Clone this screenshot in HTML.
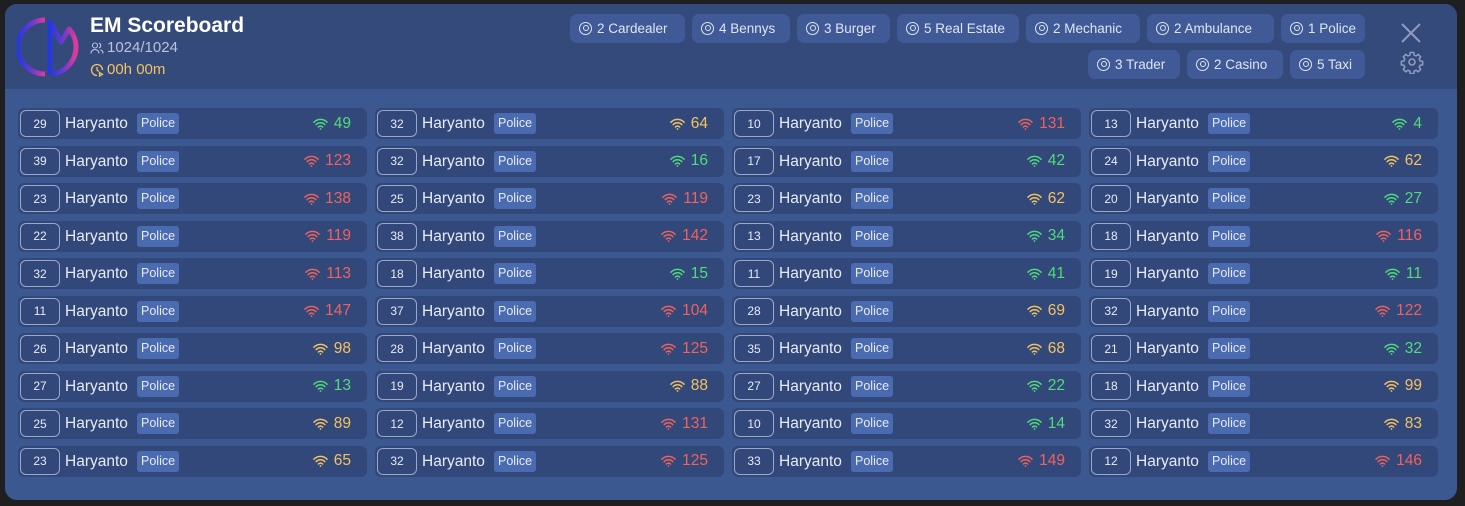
<!DOCTYPE html>
<html><head><meta charset="utf-8"><style>
*{box-sizing:border-box;margin:0;padding:0}
body{width:1465px;height:506px;background:#1f1f22;font-family:"Liberation Sans",sans-serif;position:relative;overflow:hidden}
.panel{position:absolute;left:5px;top:4px;width:1452px;height:496px;border-radius:12px;background:#3c5890;overflow:hidden}
.head{position:absolute;left:0;top:0;width:100%;height:85px;background:#344a7b}
.title{position:absolute;left:85px;top:10px;color:#fff;font-size:21px;font-weight:bold}
.sub{position:absolute;left:85px;color:#b9c3dc;font-size:15px;display:flex;align-items:center;gap:3px}
.chip{position:absolute;height:29px;background:#3f5a96;border-radius:7px;color:#dfe5f3;font-size:13.5px;display:flex;align-items:center;padding-left:9px;gap:5px}
.ci{width:13px;height:13px;border:1.5px solid #dfe5f3;border-radius:50%;position:relative}
.ci:after{content:"";position:absolute;left:3px;top:1.5px;width:4px;height:4px;border:1.3px solid #dfe5f3;border-radius:50%}
.grid{position:absolute;left:13px;top:104px;display:grid;grid-template-columns:repeat(4,349px);column-gap:8px;row-gap:6.5px;grid-auto-flow:column;grid-template-rows:repeat(10,31px)}
.r{background:#33487a;border-radius:6px;position:relative;color:#e6ebf6;font-size:15.5px}
.id{position:absolute;left:2px;top:2px;width:40px;height:27px;border:1px solid #9aa7c6;border-radius:6px;font-size:12px;display:flex;align-items:center;justify-content:center}
.n{position:absolute;left:47px;top:0;line-height:31px}
.p{position:absolute;left:119px;top:5px;background:#4b6bb0;border-radius:3px;font-size:12.5px;padding:0 4px;height:21px;line-height:21px}
.v{position:absolute;right:16px;top:0;height:31px;display:flex;align-items:center;gap:6px;font-size:15.5px}
.v svg{width:15px;height:12px}
.g{color:#4fdc7a}.y{color:#f3c360}.rd{color:#f0625c}
</style></head><body>
<svg width="0" height="0" style="position:absolute"><defs><symbol id="wf" viewBox="0 0 15 12"><path d="M1 4.2 A9 9 0 0 1 14 4.2 M3.2 6.6 A6 6 0 0 1 11.8 6.6 M5.4 9 A3 3 0 0 1 9.6 9" fill="none" stroke="currentColor" stroke-width="1.5" stroke-linecap="round"/><circle cx="7.5" cy="11" r="0.9" fill="currentColor"/></symbol></defs></svg>
<div class="panel">
<div class="head">
<svg style="position:absolute;left:12px;top:12px" width="62" height="62" viewBox="0 0 62 62"><defs><linearGradient id="lg" x1="0" x2="1"><stop offset="0" stop-color="#2438e0"/><stop offset="0.5" stop-color="#6a3ad0"/><stop offset="1" stop-color="#e23a9c"/></linearGradient></defs><path d="M28 4 A27 27 0 0 0 28 58" fill="none" stroke="url(#lg)" stroke-width="5"/><path d="M4 31 H26" stroke="url(#lg)" stroke-width="5"/><path d="M33 58 V6 L44 26 L52 13 A27 27 0 0 1 34 58" fill="none" stroke="url(#lg)" stroke-width="5" stroke-linejoin="round"/></svg>
<div class="title">EM Scoreboard</div>
<div class="sub" style="top:35px"><svg width="14" height="14" viewBox="0 0 14 14" fill="none" stroke="#b9c3dc" stroke-width="1.1"><circle cx="5" cy="4.5" r="2.5"/><path d="M1 12.5c0-2.5 1.8-4 4-4s4 1.5 4 4M9 2.2a2.4 2.4 0 0 1 0 4.6M10.5 8.8c1.5.5 2.5 1.8 2.5 3.7"/></svg>1024/1024</div>
<div class="sub" style="top:57px;color:#f3c360"><svg width="14" height="14" viewBox="0 0 14 14" fill="none" stroke="#f3c360" stroke-width="1.3"><path d="M12.5 7A5.5 5.5 0 1 0 7 12.5M7 4v3.2l2 1.3"/><path d="M9.5 9.5l3 1.8-3 1.8z"/></svg>00h 00m</div>
<div class="chip" style="left:565px;top:10px;width:115px"><span class="ci"></span>2 Cardealer</div>
<div class="chip" style="left:687px;top:10px;width:98px"><span class="ci"></span>4 Bennys</div>
<div class="chip" style="left:792px;top:10px;width:93px"><span class="ci"></span>3 Burger</div>
<div class="chip" style="left:892px;top:10px;width:122px"><span class="ci"></span>5 Real Estate</div>
<div class="chip" style="left:1021px;top:10px;width:114px"><span class="ci"></span>2 Mechanic</div>
<div class="chip" style="left:1142px;top:10px;width:127px"><span class="ci"></span>2 Ambulance</div>
<div class="chip" style="left:1276px;top:10px;width:84px"><span class="ci"></span>1 Police</div>
<div class="chip" style="left:1083px;top:46px;width:92px"><span class="ci"></span>3 Trader</div>
<div class="chip" style="left:1182px;top:46px;width:96px"><span class="ci"></span>2 Casino</div>
<div class="chip" style="left:1285px;top:46px;width:75px"><span class="ci"></span>5 Taxi</div>
<svg style="position:absolute;left:1396px;top:19px" width="20" height="20"><path d="M1 1L19 19M19 1L1 19" stroke="#8e9bbd" stroke-width="2"/></svg>
<svg style="position:absolute;left:1395px;top:46px" width="24" height="24" viewBox="0 0 24 24" fill="none" stroke="#8e9bbd" stroke-width="1.6"><circle cx="12" cy="12" r="3"/><path d="M10.3 2.5h3.4l.5 2.6 1.9.8 2.2-1.5 2.4 2.4-1.5 2.2.8 1.9 2.6.5v3.4l-2.6.5-.8 1.9 1.5 2.2-2.4 2.4-2.2-1.5-1.9.8-.5 2.6h-3.4l-.5-2.6-1.9-.8-2.2 1.5-2.4-2.4 1.5-2.2-.8-1.9-2.6-.5v-3.4l2.6-.5.8-1.9-1.5-2.2 2.4-2.4 2.2 1.5 1.9-.8z"/></svg>
</div>
<div class="grid">
<div class="r"><div class="id">29</div><span class="n">Haryanto</span><span class="p">Police</span><span class="v g"><svg><use href="#wf"/></svg>49</span></div>
<div class="r"><div class="id">39</div><span class="n">Haryanto</span><span class="p">Police</span><span class="v rd"><svg><use href="#wf"/></svg>123</span></div>
<div class="r"><div class="id">23</div><span class="n">Haryanto</span><span class="p">Police</span><span class="v rd"><svg><use href="#wf"/></svg>138</span></div>
<div class="r"><div class="id">22</div><span class="n">Haryanto</span><span class="p">Police</span><span class="v rd"><svg><use href="#wf"/></svg>119</span></div>
<div class="r"><div class="id">32</div><span class="n">Haryanto</span><span class="p">Police</span><span class="v rd"><svg><use href="#wf"/></svg>113</span></div>
<div class="r"><div class="id">11</div><span class="n">Haryanto</span><span class="p">Police</span><span class="v rd"><svg><use href="#wf"/></svg>147</span></div>
<div class="r"><div class="id">26</div><span class="n">Haryanto</span><span class="p">Police</span><span class="v y"><svg><use href="#wf"/></svg>98</span></div>
<div class="r"><div class="id">27</div><span class="n">Haryanto</span><span class="p">Police</span><span class="v g"><svg><use href="#wf"/></svg>13</span></div>
<div class="r"><div class="id">25</div><span class="n">Haryanto</span><span class="p">Police</span><span class="v y"><svg><use href="#wf"/></svg>89</span></div>
<div class="r"><div class="id">23</div><span class="n">Haryanto</span><span class="p">Police</span><span class="v y"><svg><use href="#wf"/></svg>65</span></div>
<div class="r"><div class="id">32</div><span class="n">Haryanto</span><span class="p">Police</span><span class="v y"><svg><use href="#wf"/></svg>64</span></div>
<div class="r"><div class="id">32</div><span class="n">Haryanto</span><span class="p">Police</span><span class="v g"><svg><use href="#wf"/></svg>16</span></div>
<div class="r"><div class="id">25</div><span class="n">Haryanto</span><span class="p">Police</span><span class="v rd"><svg><use href="#wf"/></svg>119</span></div>
<div class="r"><div class="id">38</div><span class="n">Haryanto</span><span class="p">Police</span><span class="v rd"><svg><use href="#wf"/></svg>142</span></div>
<div class="r"><div class="id">18</div><span class="n">Haryanto</span><span class="p">Police</span><span class="v g"><svg><use href="#wf"/></svg>15</span></div>
<div class="r"><div class="id">37</div><span class="n">Haryanto</span><span class="p">Police</span><span class="v rd"><svg><use href="#wf"/></svg>104</span></div>
<div class="r"><div class="id">28</div><span class="n">Haryanto</span><span class="p">Police</span><span class="v rd"><svg><use href="#wf"/></svg>125</span></div>
<div class="r"><div class="id">19</div><span class="n">Haryanto</span><span class="p">Police</span><span class="v y"><svg><use href="#wf"/></svg>88</span></div>
<div class="r"><div class="id">12</div><span class="n">Haryanto</span><span class="p">Police</span><span class="v rd"><svg><use href="#wf"/></svg>131</span></div>
<div class="r"><div class="id">32</div><span class="n">Haryanto</span><span class="p">Police</span><span class="v rd"><svg><use href="#wf"/></svg>125</span></div>
<div class="r"><div class="id">10</div><span class="n">Haryanto</span><span class="p">Police</span><span class="v rd"><svg><use href="#wf"/></svg>131</span></div>
<div class="r"><div class="id">17</div><span class="n">Haryanto</span><span class="p">Police</span><span class="v g"><svg><use href="#wf"/></svg>42</span></div>
<div class="r"><div class="id">23</div><span class="n">Haryanto</span><span class="p">Police</span><span class="v y"><svg><use href="#wf"/></svg>62</span></div>
<div class="r"><div class="id">13</div><span class="n">Haryanto</span><span class="p">Police</span><span class="v g"><svg><use href="#wf"/></svg>34</span></div>
<div class="r"><div class="id">11</div><span class="n">Haryanto</span><span class="p">Police</span><span class="v g"><svg><use href="#wf"/></svg>41</span></div>
<div class="r"><div class="id">28</div><span class="n">Haryanto</span><span class="p">Police</span><span class="v y"><svg><use href="#wf"/></svg>69</span></div>
<div class="r"><div class="id">35</div><span class="n">Haryanto</span><span class="p">Police</span><span class="v y"><svg><use href="#wf"/></svg>68</span></div>
<div class="r"><div class="id">27</div><span class="n">Haryanto</span><span class="p">Police</span><span class="v g"><svg><use href="#wf"/></svg>22</span></div>
<div class="r"><div class="id">10</div><span class="n">Haryanto</span><span class="p">Police</span><span class="v g"><svg><use href="#wf"/></svg>14</span></div>
<div class="r"><div class="id">33</div><span class="n">Haryanto</span><span class="p">Police</span><span class="v rd"><svg><use href="#wf"/></svg>149</span></div>
<div class="r"><div class="id">13</div><span class="n">Haryanto</span><span class="p">Police</span><span class="v g"><svg><use href="#wf"/></svg>4</span></div>
<div class="r"><div class="id">24</div><span class="n">Haryanto</span><span class="p">Police</span><span class="v y"><svg><use href="#wf"/></svg>62</span></div>
<div class="r"><div class="id">20</div><span class="n">Haryanto</span><span class="p">Police</span><span class="v g"><svg><use href="#wf"/></svg>27</span></div>
<div class="r"><div class="id">18</div><span class="n">Haryanto</span><span class="p">Police</span><span class="v rd"><svg><use href="#wf"/></svg>116</span></div>
<div class="r"><div class="id">19</div><span class="n">Haryanto</span><span class="p">Police</span><span class="v g"><svg><use href="#wf"/></svg>11</span></div>
<div class="r"><div class="id">32</div><span class="n">Haryanto</span><span class="p">Police</span><span class="v rd"><svg><use href="#wf"/></svg>122</span></div>
<div class="r"><div class="id">21</div><span class="n">Haryanto</span><span class="p">Police</span><span class="v g"><svg><use href="#wf"/></svg>32</span></div>
<div class="r"><div class="id">18</div><span class="n">Haryanto</span><span class="p">Police</span><span class="v y"><svg><use href="#wf"/></svg>99</span></div>
<div class="r"><div class="id">32</div><span class="n">Haryanto</span><span class="p">Police</span><span class="v y"><svg><use href="#wf"/></svg>83</span></div>
<div class="r"><div class="id">12</div><span class="n">Haryanto</span><span class="p">Police</span><span class="v rd"><svg><use href="#wf"/></svg>146</span></div>
</div>
</div>
</body></html>
